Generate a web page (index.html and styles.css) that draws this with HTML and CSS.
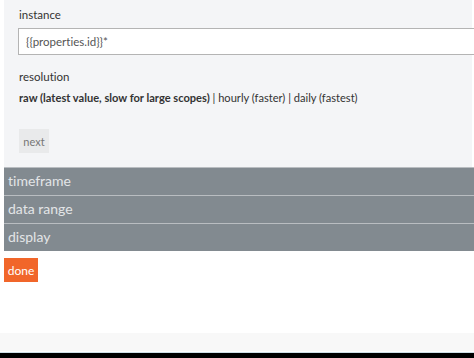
FILE: index.html
```html
<!DOCTYPE html>
<html lang="en">
<head>
    <meta charset="UTF-8">
    <title>chart wizard</title>
    <link rel="stylesheet" href="styles.css">
</head>
<body>

    <div class="page">
        <!-- Source step -->
        <div class="step-panel">
            <label class="field-label" for="instance">instance</label>
            <input type="text" id="instance" class="instance-input" value="{{properties.id}}*">

            <div class="field-label resolution-label">resolution</div>
            <div class="resolution-options">
                <span class="selected">raw (latest value, slow for large scopes)</span>
                | hourly (faster) | daily (fastest)
            </div>

            <button type="button" class="next-btn">next</button>
        </div>

        <!-- Collapsed steps -->
        <div class="step-bar">timeframe</div>
        <div class="step-bar">data range</div>
        <div class="step-bar">display</div>

        <button type="button" class="done-btn">done</button>

        <div class="footer-strip"></div>
        <div class="footer-edge"></div>
    </div>

</body>
</html>
```

FILE: styles.css
```css
* {
    box-sizing: border-box;
    margin: 0;
    padding: 0;
}

body {
    font-family: Lato, 'Open Sans', Arial, sans-serif;
    font-variant-ligatures: none;
    background-color: #fff;
    color: #333;
    overflow: hidden;
}

.page {
    display: flex;
    flex-direction: column;
    align-items: flex-start;
    min-height: 358px;
}

/* Source step */
.step-panel {
    margin-left: 4px;
    width: 468px;
    background-color: #f4f5f7;
    padding: 7px 0 14px 15px;
    display: flex;
    flex-direction: column;
    align-items: flex-start;
}

.field-label {
    font-size: 11.5px;
    line-height: 16px;
    color: #333;
}

.instance-input {
    margin-top: 5px;
    width: 460px;
    height: 27px;
    padding: 0 7px;
    border: 1px solid #b4b4b4;
    border-right: none;
    background-color: #fff;
    font-family: inherit;
    font-variant-ligatures: none;
    font-size: 11.5px;
    color: #555;
    margin-left: -1px;
}

.resolution-label {
    margin-top: 14px;
}

.resolution-options {
    margin-top: 5px;
    font-size: 11.1px;
    line-height: 16px;
    color: #333;
}

.resolution-options .selected {
    font-weight: bold;
}

.next-btn {
    margin-top: 23px;
    width: 30px;
    height: 24px;
    background-color: #e9eaeb;
    border: none;
    font-family: inherit;
    font-size: 11px;
    color: #777;
}

/* Collapsed steps */
.step-bar {
    margin-left: 4px;
    width: 470px;
    height: 28px;
    background-color: #828a90;
    border-top: 1px solid #b9bdc1;
    color: #e2e5e7;
    font-size: 14px;
    line-height: 26px;
    padding-left: 4px;
}

.step-bar:first-of-type {
    border-top-color: #8f9499;
}

.done-btn {
    margin: 7px 0 0 4px;
    width: 34px;
    height: 24px;
    background-color: #f1662a;
    border: none;
    font-family: inherit;
    font-size: 12px;
    color: #fff;
}

.footer-strip {
    margin-top: auto;
    width: 100%;
    height: 18px;
    background-color: #f8f8f8;
}

.footer-edge {
    margin-top: 1px;
    width: 100%;
    height: 6px;
    border-top: 1px solid #cfe0e8;
    background-color: #000;
}
```
